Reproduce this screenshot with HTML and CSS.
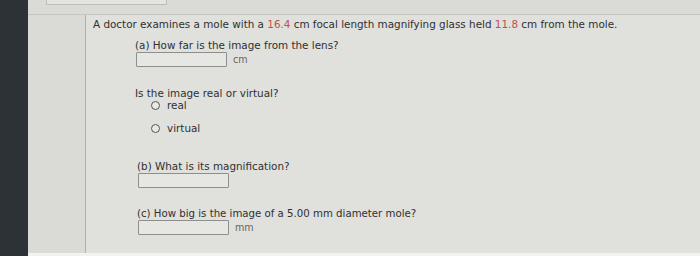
FILE: index.html
```html
<!DOCTYPE html>
<html>
<head>
<meta charset="utf-8">
<link rel="stylesheet" href="styles.css">
</head>
<body>
<div class="screen">
  <div class="sidebar"></div>
  <div class="main">
    <div class="topbar">
      <div class="tab"></div>
    </div>
    <div class="body">
      <div class="gutter"></div>
      <div class="panel">
        <p class="stem">A doctor examines a mole with a <span class="num">16.4</span> cm focal length magnifying glass held <span class="num">11.8</span> cm from the mole.</p>
        <div class="part part-a">
          <p class="q">(a) How far is the image from the lens?</p>
          <div class="answer"><span class="box"></span><span class="unit">cm</span></div>
        </div>
        <div class="part part-rv">
          <p class="q">Is the image real or virtual?</p>
          <label class="radio r1"><span class="circle"></span>real</label>
          <label class="radio r2"><span class="circle"></span>virtual</label>
        </div>
        <div class="part part-b">
          <p class="q">(b) What is its magnification?</p>
          <div class="answer"><span class="box"></span></div>
        </div>
        <div class="part part-c">
          <p class="q">(c) How big is the image of a 5.00 mm diameter mole?</p>
          <div class="answer"><span class="box"></span><span class="unit">mm</span></div>
        </div>
      </div>
    </div>
    <div class="bottom"></div>
  </div>
</div>
</body>
</html>
```
FILE: styles.css
```css
html, body {
  margin: 0;
  padding: 0;
  width: 700px;
  height: 256px;
  overflow: hidden;
  background: #dcdcd8;
}
.screen {
  display: flex;
  width: 700px;
  height: 256px;
  font-family: "DejaVu Sans", Verdana, sans-serif;
  color: #2f3031;
}
.sidebar {
  width: 28px;
  flex: none;
  background: #2c3236;
}
.main {
  flex: 1;
  display: flex;
  flex-direction: column;
  background: #d9d9d5;
}
.topbar {
  height: 14px;
  flex: none;
  border-bottom: 1px solid #c4c4c0;
  background: #dadad6;
}
.tab {
  margin-left: 18px;
  width: 119px;
  height: 4px;
  background: #e4e4e0;
  border: 1px solid #bdbdb9;
  border-top: none;
}
.body {
  flex: 1;
  display: flex;
}
.gutter {
  width: 57px;
  flex: none;
  background: #dadad6;
  border-right: 1px solid #aeaeaa;
}
.panel {
  flex: 1;
  background: #e0e0dc;
  padding: 1px 0 0 7px;
  font-size: 10.4px;
}
.bottom {
  height: 3px;
  background: #f2f2f0;
}
p { margin: 0; }
.stem {
  line-height: 14px;
  margin-top: 1px;
}
.num { color: #c0504f; }
.part { margin-left: 42px; }
.q { line-height: 13px; }
.part-a { margin-top: 8px; }
.answer {
  display: flex;
  align-items: center;
  gap: 6px;
  margin-top: 0;
  margin-left: 1px;
}
.box {
  display: block;
  width: 89px;
  height: 13px;
  border: 1px solid #8e8e8c;
  border-radius: 1px;
  background: #e6e6e2;
}
.unit { color: #666; font-size: 9.6px; }
.part-rv { margin-top: 20px; }
.radio {
  display: flex;
  align-items: center;
  gap: 7px;
  margin-left: 16px;
  line-height: 13px;
}
.r1 { margin-top: -1px; }
.r2 { margin-top: 10px; }
.circle {
  display: block;
  width: 7px;
  height: 7px;
  border: 1px solid #555;
  border-radius: 50%;
  background: #e8e8e4;
}
.part-b { margin-top: 25px; margin-left: 44px; }
.part-c { margin-top: 19px; margin-left: 44px; }
.part-c .q { font-size: 10.2px; }
```
